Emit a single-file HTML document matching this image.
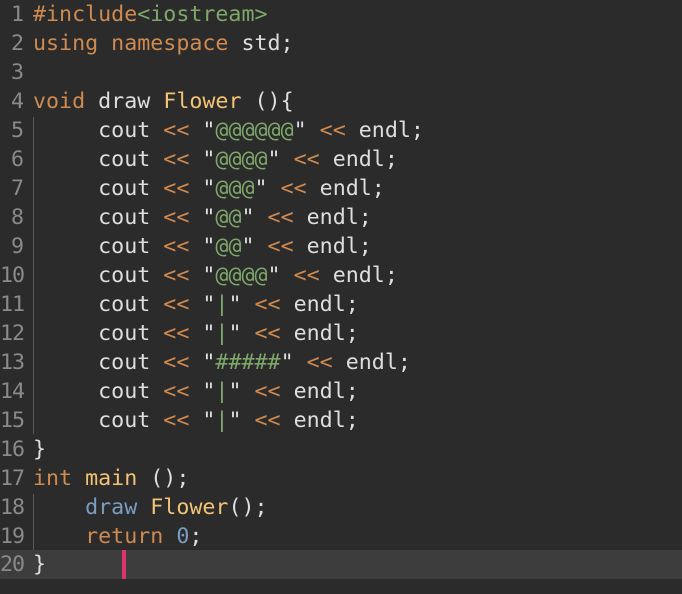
<!DOCTYPE html>
<html><head><style>
html,body{margin:0;padding:0;background:#2b2b2b;width:682px;height:594px;overflow:hidden}
.l{position:absolute;left:0;width:682px;height:29px;line-height:29px;font-family:"DejaVu Sans Mono","Liberation Mono",monospace;font-size:21.65px;color:#dedede;white-space:pre}
.n{position:absolute;left:0;width:23px;text-align:right;color:#8a8a8a;letter-spacing:-1px}
.c{position:absolute;left:33px}
.k{color:#cf8a4f}.s{color:#7ea86a}.f{color:#f2c374}.b{color:#7b9dc2}.q{color:#d8d8d8}
.g{position:absolute;left:33px;width:1px;background:#5a5a5a}
.hl{background:#3d3d3d}
</style></head><body>
<div class="g" style="top:117px;height:317px"></div>
<div class="g" style="top:494px;height:56px"></div>
<div class="l" style="top:0"><span class="n">1</span><span class="c"><span class="k">#include</span><span class="s">&lt;iostream&gt;</span></span></div>
<div class="l" style="top:29px"><span class="n">2</span><span class="c"><span class="k">using namespace</span> std;</span></div>
<div class="l" style="top:58px"><span class="n">3</span></div>
<div class="l" style="top:87px"><span class="n">4</span><span class="c"><span class="k">void</span> draw <span class="f">Flower</span> (){</span></div>
<div class="l" style="top:116px"><span class="n">5</span><span class="c">     cout <span class="k">&lt;&lt;</span> "<span class="s">@@@@@@</span>" <span class="k">&lt;&lt;</span> endl;</span></div>
<div class="l" style="top:145px"><span class="n">6</span><span class="c">     cout <span class="k">&lt;&lt;</span> "<span class="s">@@@@</span>" <span class="k">&lt;&lt;</span> endl;</span></div>
<div class="l" style="top:174px"><span class="n">7</span><span class="c">     cout <span class="k">&lt;&lt;</span> "<span class="s">@@@</span>" <span class="k">&lt;&lt;</span> endl;</span></div>
<div class="l" style="top:203px"><span class="n">8</span><span class="c">     cout <span class="k">&lt;&lt;</span> "<span class="s">@@</span>" <span class="k">&lt;&lt;</span> endl;</span></div>
<div class="l" style="top:232px"><span class="n">9</span><span class="c">     cout <span class="k">&lt;&lt;</span> "<span class="s">@@</span>" <span class="k">&lt;&lt;</span> endl;</span></div>
<div class="l" style="top:261px"><span class="n">10</span><span class="c">     cout <span class="k">&lt;&lt;</span> "<span class="s">@@@@</span>" <span class="k">&lt;&lt;</span> endl;</span></div>
<div class="l" style="top:290px"><span class="n">11</span><span class="c">     cout <span class="k">&lt;&lt;</span> "<span class="s">|</span>" <span class="k">&lt;&lt;</span> endl;</span></div>
<div class="l" style="top:319px"><span class="n">12</span><span class="c">     cout <span class="k">&lt;&lt;</span> "<span class="s">|</span>" <span class="k">&lt;&lt;</span> endl;</span></div>
<div class="l" style="top:348px"><span class="n">13</span><span class="c">     cout <span class="k">&lt;&lt;</span> "<span class="s">#####</span>" <span class="k">&lt;&lt;</span> endl;</span></div>
<div class="l" style="top:377px"><span class="n">14</span><span class="c">     cout <span class="k">&lt;&lt;</span> "<span class="s">|</span>" <span class="k">&lt;&lt;</span> endl;</span></div>
<div class="l" style="top:406px"><span class="n">15</span><span class="c">     cout <span class="k">&lt;&lt;</span> "<span class="s">|</span>" <span class="k">&lt;&lt;</span> endl;</span></div>
<div class="l" style="top:435px"><span class="n">16</span><span class="c">}</span></div>
<div class="l" style="top:464px"><span class="n">17</span><span class="c"><span class="k">int</span> <span class="f">main</span> ();</span></div>
<div class="l" style="top:493px"><span class="n">18</span><span class="c">    <span class="b">draw</span> <span class="f">Flower</span>();</span></div>
<div class="l" style="top:522px"><span class="n">19</span><span class="c">    <span class="k">return</span> <span class="b">0</span>;</span></div>
<div class="l hl" style="top:550px"><span class="n">20</span><span class="c">}</span><span style="position:absolute;left:122px;top:0;width:4px;height:29px;background:#e0336b"></span></div>
</body></html>
